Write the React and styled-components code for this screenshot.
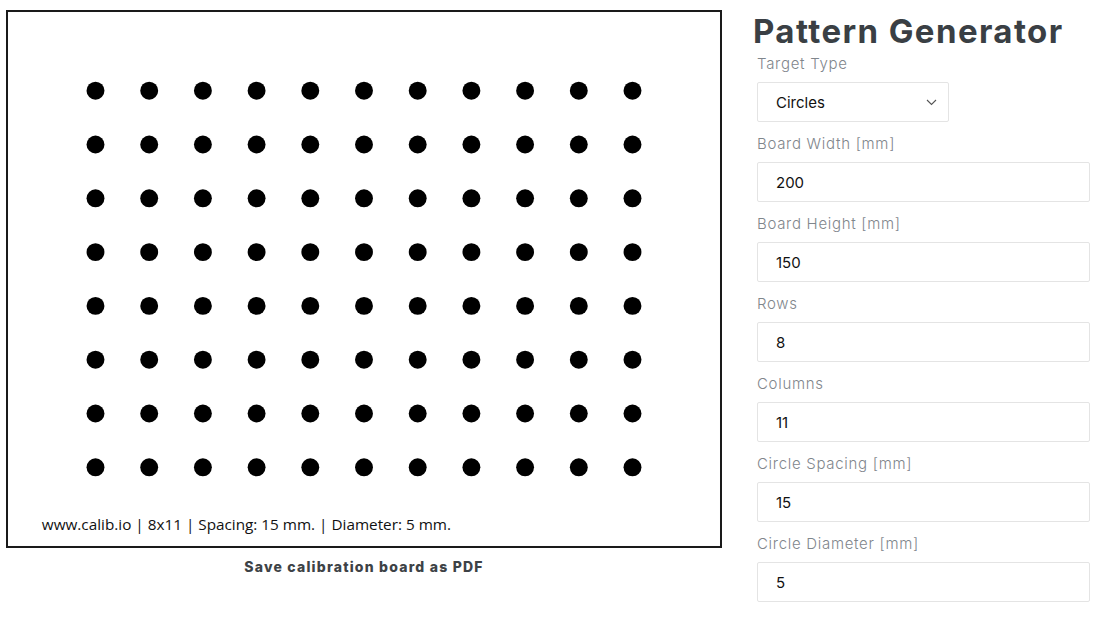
import React from "react"
import styled, { createGlobalStyle } from "styled-components"

const GlobalStyle = createGlobalStyle`
  html, body {
    margin: 0;
    padding: 0;
    background: #fff;
    font-family: "Inter", "Liberation Sans", sans-serif;
  }
`

const Page = styled.div`
  display: flex;
  align-items: flex-start;
  gap: 35px;
  padding: 10px 0 0 6px;
`

const PreviewColumn = styled.div`
  display: flex;
  flex-direction: column;
  align-items: center;
`

const Board = styled.svg`
  display: block;
  width: 716px;
  height: 538px;
`

const SaveLink = styled.a`
  margin-top: 10px;
  font-family: "Inter", "Liberation Sans", sans-serif;
  font-weight: 800;
  font-size: 14px;
  letter-spacing: 1.2px;
  color: #3d4246;
  text-decoration: none;
  cursor: pointer;
`

const Sidebar = styled.div`
  display: flex;
  flex-direction: column;
  width: 333px;
`

const Title = styled.h1`
  margin: 0 0 2px -4px;
  font-family: "Inter", "Liberation Sans", sans-serif;
  font-weight: 700;
  font-size: 33px;
  line-height: 42px;
  letter-spacing: 1.4px;
  color: #3a3f44;
`

const Field = styled.div`
  display: flex;
  flex-direction: column;
  margin-bottom: 12px;
`

const Label = styled.label`
  font-size: 15px;
  line-height: 20px;
  font-weight: 300;
  letter-spacing: 0.7px;
  color: #7f868c;
  margin-bottom: 8px;
`

const Input = styled.input`
  box-sizing: border-box;
  width: 100%;
  height: 40px;
  border: 1px solid #e4e4e4;
  border-radius: 2px;
  padding: 0 18px;
  font-family: "Inter", "Liberation Sans", sans-serif;
  font-size: 15px;
  color: #111;
  outline: none;
`

const SelectBox = styled.div`
  box-sizing: border-box;
  width: 192px;
  height: 40px;
  border: 1px solid #e4e4e4;
  border-radius: 2px;
  display: flex;
  align-items: center;
  justify-content: space-between;
  padding: 0 11px 0 18px;
  font-size: 15px;
  color: #111;
`

const Chevron = () => (
  <svg width="11" height="7" viewBox="0 0 11 7">
    <path d="M1 1 L5.5 5.5 L10 1" fill="none" stroke="#555" strokeWidth="1.1" />
  </svg>
)

const config = {
  width: 200,
  height: 150,
  rows: 8,
  cols: 11,
  spacing: 15,
  diameter: 5,
}

const CalibrationBoard = ({ width, height, rows, cols, spacing, diameter }) => {
  const gridW = (cols - 1) * spacing
  const gridH = (rows - 1) * spacing
  const x0 = (width - gridW) / 2
  const y0 = (height - gridH) / 2
  const dots = []
  for (let r = 0; r < rows; r++) {
    for (let c = 0; c < cols; c++) {
      dots.push(
        <circle
          key={`${r}-${c}`}
          cx={x0 + c * spacing}
          cy={y0 + r * spacing}
          r={diameter / 2}
          fill="#000"
        />
      )
    }
  }
  return (
    <Board viewBox={`0 0 ${width} ${height}`} preserveAspectRatio="none">
      <rect
        x="0.28"
        y="0.28"
        width={width - 0.56}
        height={height - 0.56}
        fill="#fff"
        stroke="#1a1a1a"
        strokeWidth="0.56"
      />
      {dots}
      <text
        x="10"
        y="145"
        fontFamily="Open Sans, Liberation Sans, sans-serif"
        fontSize="4.1"
        fill="#111"
        textLength="114.3"
        lengthAdjust="spacingAndGlyphs"
      >
        {`www.calib.io | ${rows}x${cols} | Spacing: ${spacing} mm. | Diameter: ${diameter} mm.`}
      </text>
    </Board>
  )
}

const fields = [
  { label: "Board Width [mm]", value: "200" },
  { label: "Board Height [mm]", value: "150" },
  { label: "Rows", value: "8" },
  { label: "Columns", value: "11" },
  { label: "Circle Spacing [mm]", value: "15" },
  { label: "Circle Diameter [mm]", value: "5" },
]

const App = () => (
  <>
    <GlobalStyle />
    <Page>
      <PreviewColumn>
        <CalibrationBoard {...config} />
        <SaveLink>Save calibration board as PDF</SaveLink>
      </PreviewColumn>
      <Sidebar>
        <Title>Pattern Generator</Title>
        <Field>
          <Label>Target Type</Label>
          <SelectBox>
            Circles
            <Chevron />
          </SelectBox>
        </Field>
        {fields.map(f => (
          <Field key={f.label}>
            <Label>{f.label}</Label>
            <Input defaultValue={f.value} />
          </Field>
        ))}
      </Sidebar>
    </Page>
  </>
)

export default App
